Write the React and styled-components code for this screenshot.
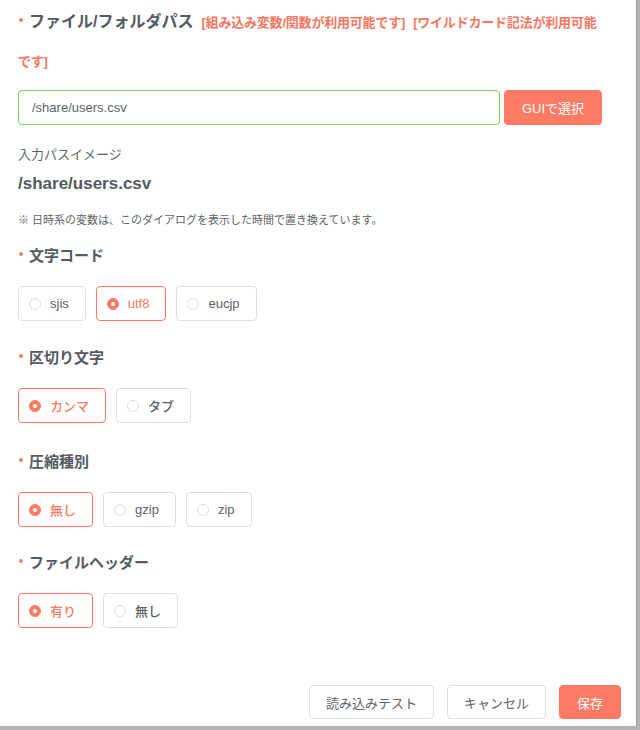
import React, { useState } from "react"
import styled, { createGlobalStyle } from "styled-components"

const GlobalStyle = createGlobalStyle`
  html, body {
    margin: 0;
    padding: 0;
    background: #b4b4b4;
  }
  body {
    font-family: "Liberation Sans", "Noto Sans CJK JP", sans-serif;
    color: #606266;
  }
`

const PRIMARY = "#fd7b65"

const Panel = styled.div`
  box-sizing: border-box;
  width: 637px;
  height: 726px;
  background: #fff;
  border-right: 1px solid #9a9a9a;
  padding: 3px 15px 7px 18px;
  display: flex;
  flex-direction: column;
`

const Label = styled.div`
  font-size: ${(p) => (p.small ? "15px" : "16px")};
  font-weight: 700;
  color: #56595f;
  line-height: 38px;
  &::before {
    content: "";
    display: inline-block;
    vertical-align: middle;
    width: 4px;
    height: 4px;
    border-radius: 50%;
    background: ${PRIMARY};
    margin: 0 6px 0 1px;
    position: relative;
    top: -3px;
  }
`

const Hint = styled.span`
  font-size: 13px;
  font-weight: 700;
  color: #f7765f;
  margin-left: 8px;
  letter-spacing: -0.2px;
`

const NoBreak = styled.span`
  white-space: nowrap;
`

const PathRow = styled.div`
  display: flex;
  gap: 4px;
  margin-top: 9px;
`

const PathInput = styled.input`
  box-sizing: border-box;
  width: 482px;
  height: 35px;
  border: 1px solid #80cc5c;
  border-radius: 4px;
  padding: 0 13px;
  font-family: inherit;
  font-size: 13px;
  color: #606266;
  outline: none;
`

const Button = styled.button`
  box-sizing: border-box;
  height: ${(p) => p.h || 34}px;
  padding: 0 ${(p) => p.px || 16}px;
  border-radius: 4px;
  font-family: inherit;
  font-size: 13px;
  cursor: pointer;
  border: 1px solid ${(p) => (p.primary ? PRIMARY : "#dcdfe6")};
  background: ${(p) => (p.primary ? PRIMARY : "#fff")};
  color: ${(p) => (p.primary ? "#fff" : "#606266")};
`

const PreviewCaption = styled.div`
  margin-top: 22px;
  font-size: 13px;
  line-height: 16px;
  color: #606266;
`

const PreviewPath = styled.div`
  margin-top: 10px;
  font-size: 17px;
  font-weight: 700;
  color: #56595f;
  line-height: 22px;
`

const Note = styled.div`
  margin-top: 18px;
  font-size: 11px;
  line-height: 14px;
  color: #606266;
`

const Section = styled.div`
  margin-top: ${(p) => p.top}px;
`

const RadioRow = styled.div`
  display: flex;
  gap: 10px;
  margin-top: 11px;
`

const RadioBox = styled.label`
  box-sizing: border-box;
  height: 35px;
  display: flex;
  align-items: center;
  gap: 9px;
  padding: 0 16px 0 10px;
  border: 1px solid ${(p) => (p.checked ? PRIMARY : "#dcdfe6")};
  border-radius: 4px;
  font-size: 13px;
  font-weight: 500;
  color: ${(p) => (p.checked ? PRIMARY : "#606266")};
  cursor: pointer;
`

const Dot = styled.span`
  box-sizing: border-box;
  width: 12px;
  height: 12px;
  border-radius: 50%;
  border: 1px solid ${(p) => (p.checked ? PRIMARY : "#dcdfe6")};
  background: ${(p) => (p.checked ? PRIMARY : "#fff")};
  display: flex;
  align-items: center;
  justify-content: center;
  &::after {
    content: "";
    width: 4px;
    height: 4px;
    border-radius: 50%;
    background: #fff;
    display: ${(p) => (p.checked ? "block" : "none")};
  }
`

const Footer = styled.div`
  margin-top: auto;
  display: flex;
  justify-content: flex-end;
  gap: 13px;
`

const RadioGroup = ({ options, value, onChange }) => (
  <RadioRow>
    {options.map((opt) => (
      <RadioBox key={opt} checked={value === opt} onClick={() => onChange(opt)}>
        <Dot checked={value === opt} />
        {opt}
      </RadioBox>
    ))}
  </RadioRow>
)

const sections = [
  { key: "encoding", label: "文字コード", options: ["sjis", "utf8", "eucjp"], init: "utf8", top: 10 },
  { key: "delimiter", label: "区切り文字", options: ["カンマ", "タブ"], init: "カンマ", top: 18 },
  { key: "compress", label: "圧縮種別", options: ["無し", "gzip", "zip"], init: "無し", top: 20 },
  { key: "header", label: "ファイルヘッダー", options: ["有り", "無し"], init: "有り", top: 17 },
]

const App = () => {
  const [path, setPath] = useState("/share/users.csv")
  const [values, setValues] = useState(
    Object.fromEntries(sections.map((s) => [s.key, s.init]))
  )

  return (
    <>
      <GlobalStyle />
      <Panel>
        <Label>
          ファイル/フォルダパス
          <Hint>[組み込み変数/関数が利用可能です]</Hint>
          <Hint>
            [ワイルドカード記法が利用可能<NoBreak>です]</NoBreak>
          </Hint>
        </Label>
        <PathRow>
          <PathInput value={path} onChange={(e) => setPath(e.target.value)} />
          <Button primary h={35} px={17}>GUIで選択</Button>
        </PathRow>
        <PreviewCaption>入力パスイメージ</PreviewCaption>
        <PreviewPath>{path}</PreviewPath>
        <Note>※ 日時系の変数は、このダイアログを表示した時間で置き換えています。</Note>
        {sections.map((s) => (
          <Section key={s.key} top={s.top}>
            <Label small>{s.label}</Label>
            <RadioGroup
              options={s.options}
              value={values[s.key]}
              onChange={(v) => setValues({ ...values, [s.key]: v })}
            />
          </Section>
        ))}
        <Footer>
          <Button>読み込みテスト</Button>
          <Button>キャンセル</Button>
          <Button primary px={17}>保存</Button>
        </Footer>
      </Panel>
    </>
  )
}

export default App
